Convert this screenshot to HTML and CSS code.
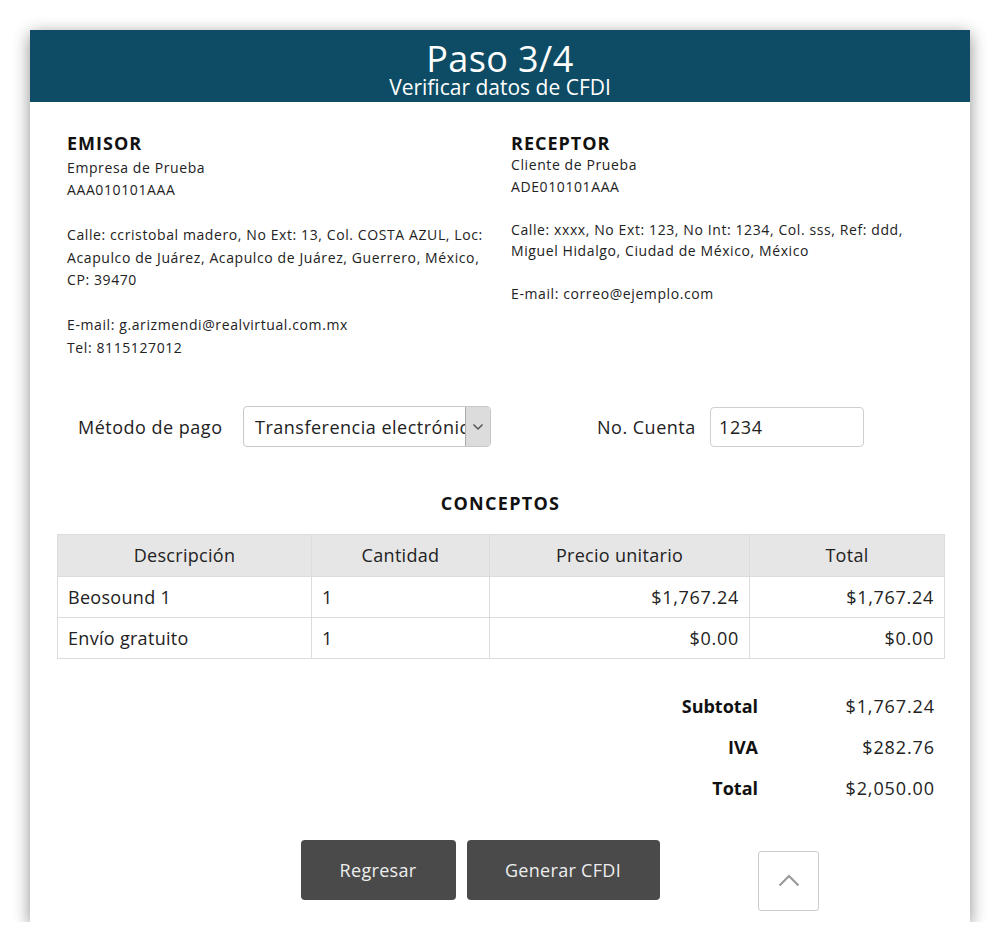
FILE: index.html
```html
<!DOCTYPE html>
<html lang="es">
<head>
<meta charset="utf-8">
<title>Paso 3/4 - Verificar datos de CFDI</title>
<link rel="stylesheet" href="styles.css">
</head>
<body>
<div class="card">
  <header class="card-header">
    <h1 class="title">Paso 3/4</h1>
    <div class="subtitle">Verificar datos de CFDI</div>
  </header>

  <div class="card-body">
    <section class="parties">
      <div class="party party-emisor">
        <h3 class="party-title">EMISOR</h3>
        <p class="p-first">Empresa de Prueba<br>AAA010101AAA</p>
        <p class="p-gap">Calle: ccristobal madero, No Ext: 13, Col. COSTA AZUL, Loc: Acapulco de Juárez, Acapulco de Juárez, Guerrero, México, CP: 39470</p>
        <p class="p-gap">E-mail: g.arizmendi@realvirtual.com.mx<br>Tel: 8115127012</p>
      </div>
      <div class="party party-receptor">
        <h3 class="party-title">RECEPTOR</h3>
        <p>Cliente de Prueba<br>ADE010101AAA</p>
        <p class="p-gap">Calle: xxxx, No Ext: 123, No Int: 1234, Col. sss, Ref: ddd, Miguel Hidalgo, Ciudad de México, México</p>
        <p class="p-gap">E-mail: correo@ejemplo.com</p>
      </div>
    </section>

    <section class="form-row">
      <div class="field field-metodo">
        <label class="field-label" for="metodo">Método de pago</label>
        <div class="select-wrap">
          <select id="metodo" class="select">
            <option>Transferencia electrónica</option>
          </select>
          <span class="select-arrow">
            <svg width="12" height="8" viewBox="0 0 12 8"><polyline points="1.5,1.5 6,6 10.5,1.5" fill="none" stroke="#555" stroke-width="1.5"/></svg>
          </span>
        </div>
      </div>
      <div class="field field-cuenta">
        <label class="field-label" for="cuenta">No. Cuenta</label>
        <input id="cuenta" class="input" type="text" value="1234">
      </div>
    </section>

    <h2 class="section-title">CONCEPTOS</h2>

    <table class="concepts">
      <colgroup>
        <col class="c1"><col class="c2"><col class="c3"><col class="c4">
      </colgroup>
      <thead>
        <tr><th>Descripción</th><th>Cantidad</th><th>Precio unitario</th><th>Total</th></tr>
      </thead>
      <tbody>
        <tr><td>Beosound 1</td><td>1</td><td class="num">$1,767.24</td><td class="num">$1,767.24</td></tr>
        <tr><td>Envío gratuito</td><td>1</td><td class="num">$0.00</td><td class="num">$0.00</td></tr>
      </tbody>
    </table>

    <div class="totals">
      <div class="t-label">Subtotal</div><div class="t-value">$1,767.24</div>
      <div class="t-label">IVA</div><div class="t-value">$282.76</div>
      <div class="t-label">Total</div><div class="t-value">$2,050.00</div>
    </div>

    <div class="actions">
      <button class="btn btn-back" type="button">Regresar</button>
      <button class="btn btn-generate" type="button">Generar CFDI</button>
    </div>
  </div>

  <button class="to-top" type="button" aria-label="Subir">
    <svg width="22" height="13" viewBox="0 0 22 13"><polyline points="1.5,11.5 11,2 20.5,11.5" fill="none" stroke="#9a9a9a" stroke-width="2.2"/></svg>
  </button>
</div>
</body>
</html>
```

FILE: styles.css
```css
* { box-sizing: border-box; }

html, body {
  margin: 0;
  padding: 0;
  background: #ffffff;
}

body {
  font-family: "Open Sans", "Liberation Sans", sans-serif;
  color: #222222;
}

.card {
  position: relative;
  width: 940px;
  margin: 30px 0 0 30px;
  background: #ffffff;
  box-shadow: 0 4px 16px rgba(0, 0, 0, 0.45);
}

.card-header {
  height: 72px;
  background: #0d4c64;
  color: #ffffff;
  text-align: center;
  padding-top: 11px;
}

.title {
  margin: 0;
  font-size: 36px;
  line-height: 36px;
  font-weight: 400;
  letter-spacing: 0.4px;
}

.subtitle {
  font-size: 21px;
  line-height: 20px;
}

.card-body {
  padding: 30px 26px 22px 27px;
}

/* Parties */
.parties {
  display: grid;
  grid-template-columns: 428px 420px;
  column-gap: 16px;
  padding: 0 10px;
}

.party-title {
  margin: 0;
  font-size: 18px;
  line-height: 22px;
  font-weight: 700;
  letter-spacing: 1px;
  color: #111111;
}

.party p {
  margin: 0;
  font-size: 14px;
  letter-spacing: 0.6px;
}

.party-emisor p { line-height: 22.5px; }
.party-emisor .p-first { margin-top: 2.75px; }
.party-emisor .p-gap { margin-top: 22.5px; }

.party-receptor p { line-height: 21.5px; }
.party-receptor .p-gap { margin-top: 21.5px; }

/* Form row */
.form-row {
  display: flex;
  margin-top: 47.5px;
  height: 40px;
}

.field {
  display: flex;
  align-items: center;
}

.field-metodo { margin-left: 21px; }
.field-cuenta { margin-left: 106px; }

.field-label {
  font-size: 18px;
  letter-spacing: 0.5px;
  color: #222222;
}

.field-metodo .field-label { width: 165px; }
.field-cuenta .field-label { width: 113px; }

.select-wrap {
  display: flex;
  width: 248px;
  height: 41px;
  border: 1px solid #c8c8c8;
  border-radius: 4px;
  overflow: hidden;
  background: #ffffff;
}

.select {
  flex: 1;
  min-width: 0;
  appearance: none;
  -webkit-appearance: none;
  border: 0;
  background: transparent;
  font-family: inherit;
  font-size: 18px;
  letter-spacing: 0.5px;
  color: #222222;
  padding: 0 0 0 11px;
  outline: none;
}

.select-arrow {
  width: 25px;
  display: flex;
  align-items: center;
  justify-content: center;
  background: #dcdcdc;
  border-left: 1px solid #a9a9a9;
}

.input {
  width: 154px;
  height: 40px;
  border: 1px solid #cfcfcf;
  border-radius: 4px;
  padding: 0 0 0 8px;
  font-family: inherit;
  font-size: 18px;
  letter-spacing: 0.6px;
  color: #222222;
  outline: none;
}

/* Concepts */
.section-title {
  margin: 44px 0 0;
  text-align: center;
  font-size: 18px;
  line-height: 24px;
  font-weight: 700;
  letter-spacing: 1.3px;
  color: #111111;
}

.concepts {
  margin-top: 19px;
  width: 887px;
  border-collapse: collapse;
  table-layout: fixed;
  font-size: 18px;
  letter-spacing: 0.3px;
}

.concepts .c1 { width: 254px; }
.concepts .c2 { width: 178px; }
.concepts .c3 { width: 260px; }
.concepts .c4 { width: 195px; }

.concepts th,
.concepts td {
  border: 1px solid #dcdcdc;
  padding: 0 10px;
  color: #222222;
}

.concepts th {
  height: 42px;
  background: #e6e6e6;
  font-weight: 400;
  text-align: center;
}

.concepts td {
  height: 41px;
  text-align: left;
}

.concepts td.num {
  text-align: right;
  letter-spacing: 0.7px;
}

/* Totals */
.totals {
  display: grid;
  grid-template-columns: auto 177px;
  grid-auto-rows: 41px;
  justify-content: end;
  align-items: center;
  margin: 26.5px 9px 0 0;
  font-size: 18px;
}

.t-label {
  text-align: right;
  font-weight: 700;
  color: #111111;
}

.t-value {
  text-align: right;
  letter-spacing: 0.9px;
}

/* Actions */
.actions {
  display: flex;
  justify-content: center;
  gap: 11px;
  margin-top: 31.5px;
  padding-right: 41px;
}

.btn {
  height: 60px;
  border: 0;
  border-radius: 4px;
  background: #4a4a4a;
  color: #eeeeee;
  font-family: inherit;
  font-size: 18px;
  letter-spacing: 0.3px;
}

.btn-back { width: 155px; }
.btn-generate { width: 193px; }

.to-top {
  position: absolute;
  left: 728px;
  bottom: 11px;
  width: 61px;
  height: 60px;
  border: 1px solid #cccccc;
  border-radius: 3px;
  background: #ffffff;
  display: flex;
  align-items: center;
  justify-content: center;
  padding: 0;
}
```
